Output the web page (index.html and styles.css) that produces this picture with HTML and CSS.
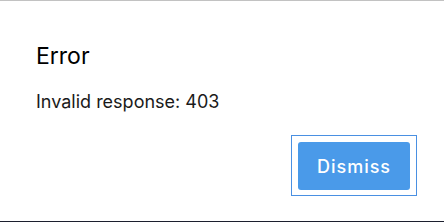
FILE: index.html
```html
<!DOCTYPE html>
<html>
<head>
<meta charset="utf-8">
<link rel="stylesheet" href="styles.css">
</head>
<body>
<div class="dialog">
  <h1 class="title">Error</h1>
  <p class="message">Invalid response: 403</p>
  <div class="actions">
    <div class="focus-ring">
      <button class="btn">Dismiss</button>
    </div>
  </div>
</div>
</body>
</html>
```
FILE: styles.css
```css
html, body {
  margin: 0;
  padding: 0;
  background: #fff;
}
body {
  width: 444px;
  height: 222px;
  box-sizing: border-box;
  border-top: 1px solid #c2c2c2;
  border-bottom: 1px solid #1c1f2e;
  font-family: Inter, "Liberation Sans", sans-serif;
  color: #000;
}
.dialog {
  padding: 41px 27px 0 36px;
}
.title {
  margin: 0;
  font-size: 23px;
  font-weight: 400;
  line-height: 28px;
}
.message {
  margin: 21px 0 0;
  font-size: 18px;
  line-height: 22px;
  color: #1a1a1a;
}
.actions {
  display: flex;
  justify-content: flex-end;
  margin-top: 22px;
}
.focus-ring {
  display: flex;
  border: 1px solid #4a90e2;
  padding: 6px 6px 5px 6px;
}
.btn {
  display: block;
  width: 112px;
  height: 48px;
  border: none;
  border-radius: 3px;
  background: #4a9ae9;
  color: #fff;
  font-family: Inter, "Liberation Sans", sans-serif;
  font-size: 18px;
  font-weight: 500;
  letter-spacing: 1px;
  outline: none;
}
```
